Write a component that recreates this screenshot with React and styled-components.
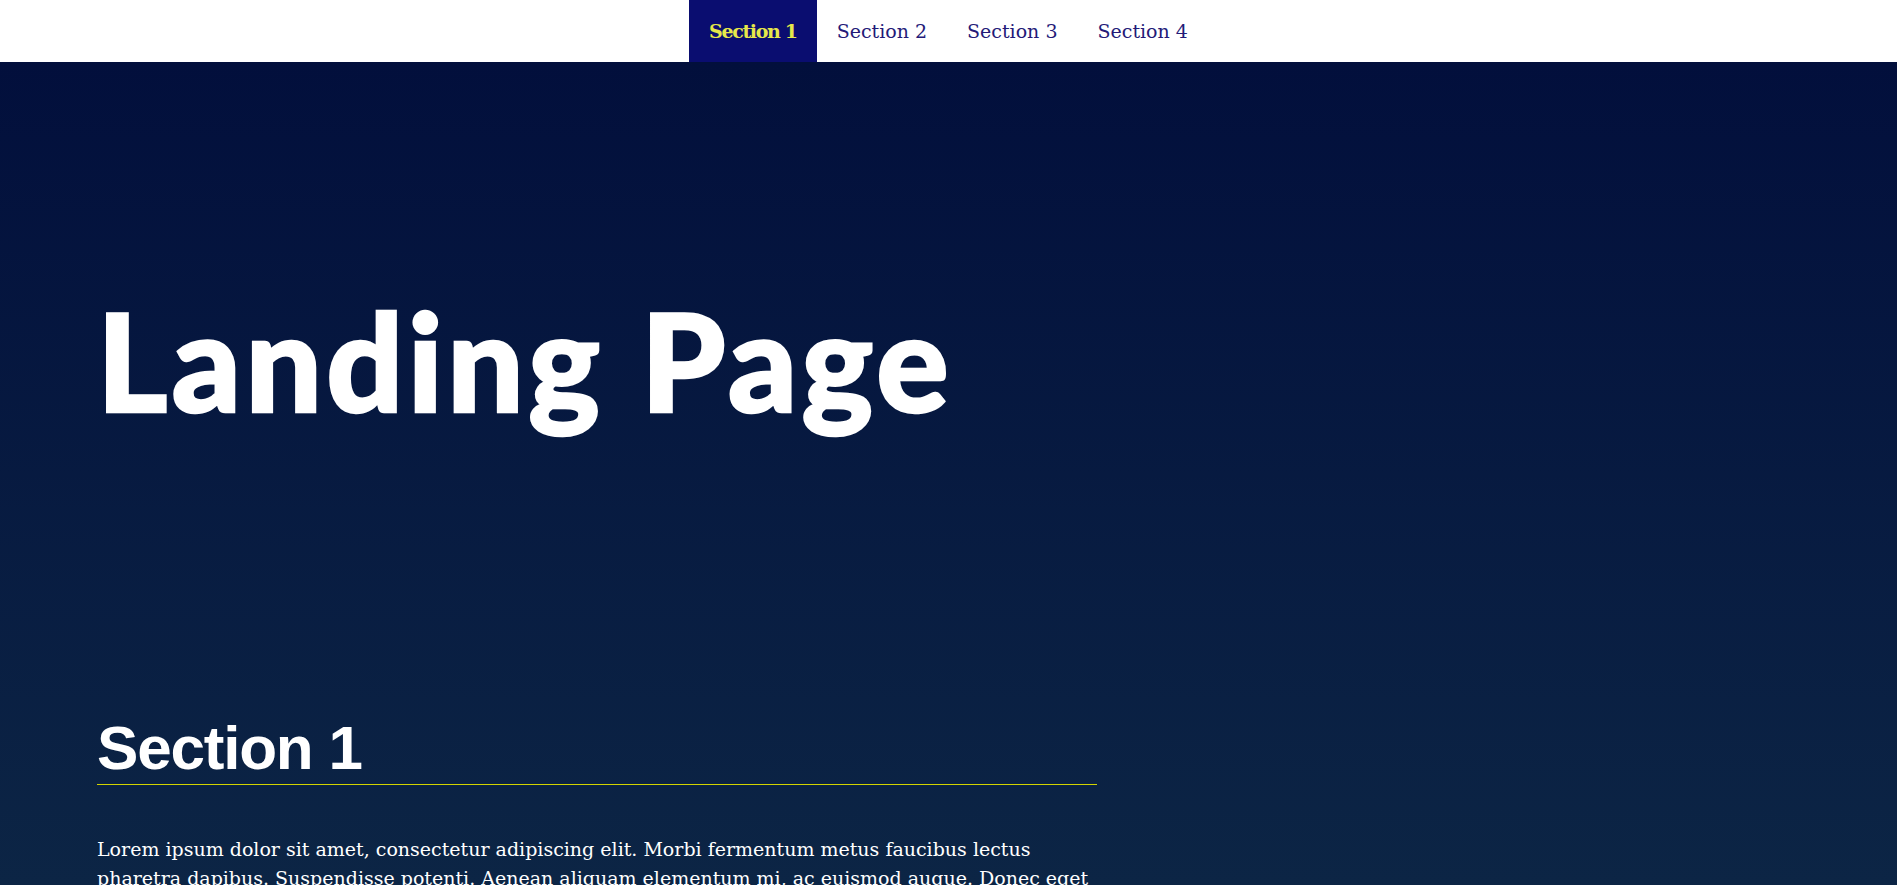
import React from "react";
import styled, { createGlobalStyle } from "styled-components";

const GlobalStyle = createGlobalStyle`
  * { box-sizing: border-box; }
  html, body { margin: 0; padding: 0; }
  body {
    background: linear-gradient(180deg, #010d3a 0%, #020f3c 7%, #0c2545 100%) fixed;
    color: #ffffff;
    font-family: "DejaVu Serif", "Liberation Serif", serif;
  }
`;

const NavBar = styled.nav`
  position: sticky;
  top: 0;
  z-index: 10;
  height: 62px;
  background: #ffffff;
  display: flex;
  justify-content: center;
`;

const NavList = styled.ul`
  list-style: none;
  margin: 0;
  padding: 0;
  display: flex;
  height: 100%;
`;

const NavLink = styled.a`
  display: flex;
  align-items: center;
  height: 100%;
  padding: 0 20px 1px;
  font-family: "DejaVu Serif", "Liberation Serif", serif;
  font-size: 19px;
  font-weight: ${(p) => (p.$active ? 700 : 400)};
  letter-spacing: ${(p) => (p.$active ? "-1.35px" : "0")};
  color: ${(p) => (p.$active ? "#e6e84a" : "#241a78")};
  background: ${(p) => (p.$active ? "#0a0d70" : "transparent")};
  text-decoration: none;
  cursor: pointer;
`;

const Main = styled.main`
  padding: 0 97px 120px;
`;

const Hero = styled.header`
  padding-top: 217px;
  height: 650px;
`;

const Title = styled.h1`
  margin: 0;
  font-family: "Lato", "Liberation Sans", sans-serif;
  font-weight: 900;
  font-size: 135px;
  line-height: 1.2;
  letter-spacing: 4.4px;
  color: #ffffff;
  -webkit-text-stroke: 2.5px #ffffff;
`;

const Section = styled.section`
  max-width: 1000px;
  padding-bottom: 40px;
`;

const SectionTitle = styled.h2`
  margin: 0;
  padding-bottom: 1px;
  font-family: "Liberation Sans", Arial, sans-serif;
  font-weight: 700;
  font-size: 62px;
  line-height: 1.15;
  letter-spacing: -1.2px;
  color: #ffffff;
  border-bottom: 1px solid #d2d400;
`;

const Paragraph = styled.p`
  margin: 50px 0 0;
  font-family: "DejaVu Serif", "Liberation Serif", serif;
  font-size: 19px;
  line-height: 29px;
  color: #ffffff;
`;

const links = ["Section 1", "Section 2", "Section 3", "Section 4"];

const lorem =
  "Lorem ipsum dolor sit amet, consectetur adipiscing elit. Morbi fermentum metus faucibus lectus pharetra dapibus. Suspendisse potenti. Aenean aliquam elementum mi, ac euismod augue. Donec eget lacinia ex. Phasellus imperdiet porta orci eget mollis. Sed convallis sollicitudin mauris ac tincidunt. Donec bibendum, nulla eget bibendum consectetur, sem nisi aliquam leo, ut pulvinar quam nunc eu augue. Pellentesque maximus imperdiet elit a pharetra. Duis lectus mi, aliquam in mi quis, aliquam porttitor lacus. Morbi a tincidunt felis. Sed leo nunc, pharetra et elementum non, faucibus vitae elit. Integer nec libero venenatis libero ultricies molestie semper in tellus. Sed congue et odio sed euismod.";

const lorem2 =
  "Aliquam luctus, nulla nec maximus condimentum, nisl massa sagittis ligula, a tristique nibh augue at lacus. Vestibulum ante ipsum primis in faucibus orci luctus et ultrices posuere cubilia curae; Integer at mauris dignissim, sagittis ligula at, ullamcorper risus. Nam vel lectus sit amet nisl pulvinar tincidunt.";

export default function App() {
  return (
    <>
      <GlobalStyle />
      <NavBar>
        <NavList>
          {links.map((l, i) => (
            <li key={l}>
              <NavLink $active={i === 0} href={`#section${i + 1}`}>
                {l}
              </NavLink>
            </li>
          ))}
        </NavList>
      </NavBar>
      <Main>
        <Hero>
          <Title>Landing Page</Title>
        </Hero>
        {links.map((l, i) => (
          <Section key={l} id={`section${i + 1}`}>
            <SectionTitle>{l}</SectionTitle>
            <Paragraph>{lorem}</Paragraph>
            <Paragraph>{lorem2}</Paragraph>
          </Section>
        ))}
      </Main>
    </>
  );
}
